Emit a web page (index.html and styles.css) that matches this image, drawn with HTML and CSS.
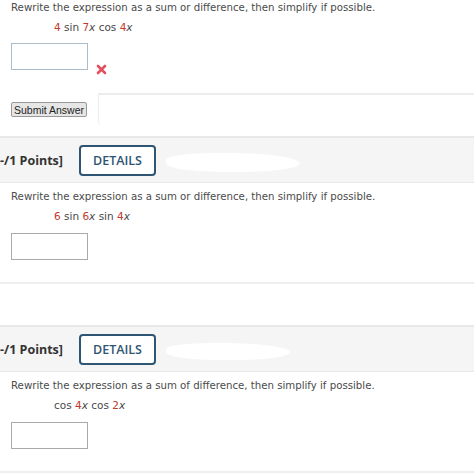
FILE: index.html
```html
<!DOCTYPE html>
<html lang="en">
<head>
    <meta charset="UTF-8">
    <title>Questions</title>
    <link rel="stylesheet" href="styles.css">
</head>
<body>
    <div class="question first">
        <p class="prompt">Rewrite the expression as a sum or difference, then simplify if possible.</p>
        <p class="expr"><span class="num">4</span> sin <span class="num">7</span><i>x</i> cos <span class="num">4</span><i>x</i></p>
        <div class="answer-row">
            <div class="answer-box blue"></div>
            <svg class="wrong" width="11" height="11" viewBox="0 0 11 11">
                <path d="M2 2 L9 9 M9 2 L2 9" stroke="#e0505e" stroke-width="2.6" stroke-linecap="round"/>
            </svg>
        </div>
        <div class="submit-row">
            <button class="submit">Submit Answer</button>
            <div class="tab-panel"></div>
        </div>
    </div>

    <div class="question">
        <div class="head">
            <span class="points">-/1 Points]</span>
            <button class="details">DETAILS</button>
            <span class="smudge"></span>
        </div>
        <p class="prompt">Rewrite the expression as a sum or difference, then simplify if possible.</p>
        <p class="expr"><span class="num">6</span> sin <span class="num">6</span><i>x</i> sin <span class="num">4</span><i>x</i></p>
        <div class="answer-box"></div>
    </div>

    <div class="question last">
        <div class="head">
            <span class="points">-/1 Points]</span>
            <button class="details">DETAILS</button>
            <span class="smudge small"></span>
        </div>
        <p class="prompt">Rewrite the expression as a sum of difference, then simplify if possible.</p>
        <p class="expr">cos <span class="num">4</span><i>x</i> cos <span class="num">2</span><i>x</i></p>
        <div class="answer-box"></div>
    </div>
</body>
</html>
```

FILE: styles.css
```css
body {
    margin: 0;
    width: 474px;
    font-family: "DejaVu Sans", Verdana, sans-serif;
    color: #4a4a4a;
    background: #fff;
}
.question {
    border-bottom: 2px solid #eee;
    padding-bottom: 22px;
    margin-bottom: 41px;
}
.question.first {
    padding-bottom: 11px;
    margin-bottom: 0;
    border-bottom: none;
}
.question.last {
    margin-bottom: 0;
}
.prompt {
    font-size: 10.2px;
    margin: 0;
    padding-left: 11px;
    line-height: 13px;
}
.first .prompt {
    padding-top: 1px;
}
.expr {
    font-size: 10.5px;
    margin: 0;
    padding: 7px 0 0 54px;
    line-height: 13px;
}
.num {
    color: #c0392b;
}
.expr i {
    font-style: italic;
}
.answer-box {
    width: 75px;
    height: 25px;
    border: 1px solid #aaa;
    margin: 10px 0 0 11px;
}
.answer-box.blue {
    border-color: #a9bccb;
    margin-top: 0;
}
.answer-row {
    display: flex;
    align-items: flex-end;
    gap: 8px;
    margin-top: 9px;
}
.wrong {
    margin-bottom: -5px;
}
.submit-row {
    display: flex;
    align-items: flex-start;
    margin-top: 23px;
}
.submit {
    font-family: "Liberation Sans", Arial, sans-serif;
    font-size: 10.5px;
    color: #222;
    background: #e6e6e6;
    border: 1px solid #999;
    border-radius: 2px;
    padding: 0 2px;
    height: 15px;
    line-height: 12px;
    margin: 9px 0 0 11px;
}
.tab-panel {
    flex: 1;
    height: 30px;
    margin-left: 11px;
    border-top: 2px solid #ececec;
    border-left: 1px solid #ececec;
    border-bottom-left-radius: 4px;
}
.head {
    display: flex;
    align-items: center;
    height: 44px;
    background: #f5f5f5;
    border-top: 2px solid #e8e8e8;
    border-bottom: 1px solid #e8e8e8;
    margin-bottom: 7px;
}
.points {
    font-family: "Open Sans", sans-serif;
    font-weight: bold;
    font-size: 12.5px;
    color: #333;
    width: 79px;
}
.details {
    font-family: "Open Sans", sans-serif;
    font-weight: 600;
    font-size: 12.5px;
    color: #2e5573;
    background: #fff;
    border: 2px solid #2e5573;
    border-radius: 4px;
    width: 77px;
    height: 31px;
    padding: 0;
}
.smudge {
    width: 134px;
    height: 19px;
    margin: 4px 0 0 10px;
    background: #fff;
    border-radius: 40% 60% 50% 50%;
}
.smudge.small {
    width: 124px;
    height: 17px;
}
```
